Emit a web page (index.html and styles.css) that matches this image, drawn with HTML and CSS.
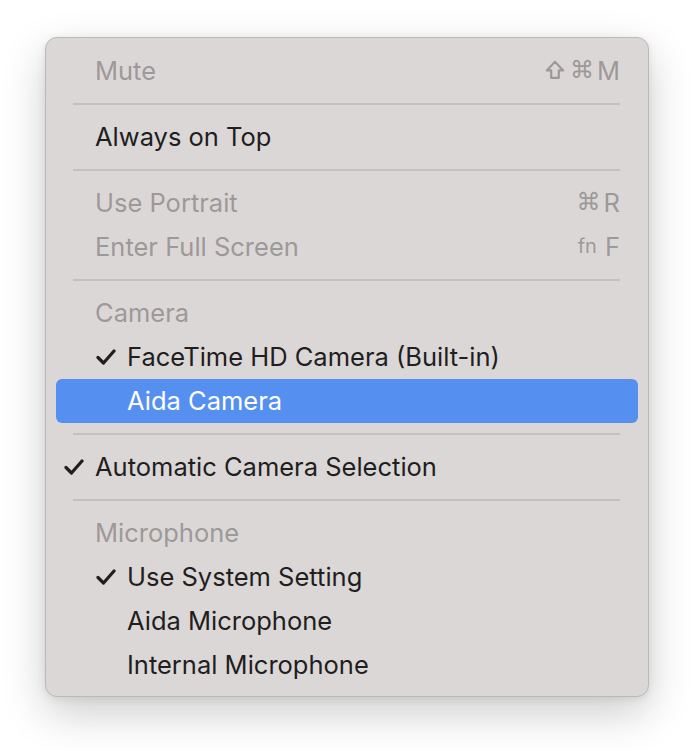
FILE: index.html
```html
<!DOCTYPE html>
<html>
<head>
<meta charset="utf-8">
<link rel="stylesheet" href="styles.css">
</head>
<body>
<div class="menu">
  <div class="item disabled">
    <span class="mark"></span><span class="label">Mute</span>
    <span class="keys">
      <svg class="shift" viewBox="0 0 20 20" width="20" height="20"><path d="M10 1.8 L18.2 10.4 H13.8 V17.8 H6.2 V10.4 H1.8 Z" fill="none" stroke="currentColor" stroke-width="2.2" stroke-linejoin="round"/></svg>
      <span class="cmd">⌘</span><span class="key">M</span>
    </span>
  </div>
  <div class="sep"></div>
  <div class="item"><span class="mark"></span><span class="label">Always on Top</span></div>
  <div class="sep"></div>
  <div class="item disabled">
    <span class="mark"></span><span class="label">Use Portrait</span>
    <span class="keys"><span class="cmd">⌘</span><span class="key">R</span></span>
  </div>
  <div class="item disabled">
    <span class="mark"></span><span class="label">Enter Full Screen</span>
    <span class="keys"><span class="fn">fn</span><span class="key">F</span></span>
  </div>
  <div class="sep"></div>
  <div class="item header"><span class="mark"></span><span class="label">Camera</span></div>
  <div class="item sub">
    <span class="mark"><svg class="check" viewBox="0 0 20 16" width="20" height="16"><path d="M2 8.5 L7.5 14 L18 2" fill="none" stroke="currentColor" stroke-width="3.2" stroke-linecap="round" stroke-linejoin="round"/></svg></span><span class="label">FaceTime HD Camera (Built-in)</span>
  </div>
  <div class="item sub selected"><span class="mark"></span><span class="label">Aida Camera</span></div>
  <div class="sep"></div>
  <div class="item">
    <span class="mark"><svg class="check" viewBox="0 0 20 16" width="20" height="16"><path d="M2 8.5 L7.5 14 L18 2" fill="none" stroke="currentColor" stroke-width="3.2" stroke-linecap="round" stroke-linejoin="round"/></svg></span><span class="label">Automatic Camera Selection</span>
  </div>
  <div class="sep"></div>
  <div class="item header"><span class="mark"></span><span class="label">Microphone</span></div>
  <div class="item sub">
    <span class="mark"><svg class="check" viewBox="0 0 20 16" width="20" height="16"><path d="M2 8.5 L7.5 14 L18 2" fill="none" stroke="currentColor" stroke-width="3.2" stroke-linecap="round" stroke-linejoin="round"/></svg></span><span class="label">Use System Setting</span>
  </div>
  <div class="item sub"><span class="mark"></span><span class="label">Aida Microphone</span></div>
  <div class="item sub"><span class="mark"></span><span class="label">Internal Microphone</span></div>
</div>
</body>
</html>
```
FILE: styles.css
```css
html, body {
  margin: 0;
  padding: 0;
  background: #ffffff;
}
body {
  padding: 37px 0 0 45px;
  min-height: 750px;
  box-sizing: border-box;
  font-family: Inter, "Liberation Sans", sans-serif;
}
.menu {
  box-sizing: border-box;
  width: 604px;
  background: #dcd7d7;
  border: 1px solid #bdb8b8;
  border-radius: 12px;
  padding: 11px 10px 9px 10px;
  box-shadow: 0 16px 44px rgba(0, 0, 0, 0.2), 0 2px 8px rgba(0, 0, 0, 0.08);
}
.item {
  box-sizing: border-box;
  display: flex;
  align-items: center;
  height: 44px;
  padding: 0 18px 2px 8px;
  font-size: 25.5px;
  color: #201e1e;
  border-radius: 6px;
}
.item.sub {
  padding-left: 40px;
}
.item.disabled,
.item.header {
  color: #9d9999;
}
.item.selected {
  background: #5590f1;
  color: #ffffff;
}
.mark {
  width: 31px;
  flex: 0 0 31px;
  display: flex;
  align-items: center;
}
.check {
  display: block;
  margin-top: 2px;
}
.label {
  flex: 1;
  white-space: nowrap;
}
.keys {
  display: flex;
  align-items: center;
  color: #9d9999;
}
.shift {
  display: block;
  margin-right: 5px;
}
.cmd {
  font-family: "DejaVu Sans", sans-serif;
  font-size: 24px;
  margin-right: 3px;
}
.fn {
  font-size: 20px;
  margin-right: 8px;
}
.key {
  font-size: 25.5px;
}
.sep {
  height: 2px;
  margin: 10px 18px 10px 17px;
  background: #c5c0c0;
}
```
